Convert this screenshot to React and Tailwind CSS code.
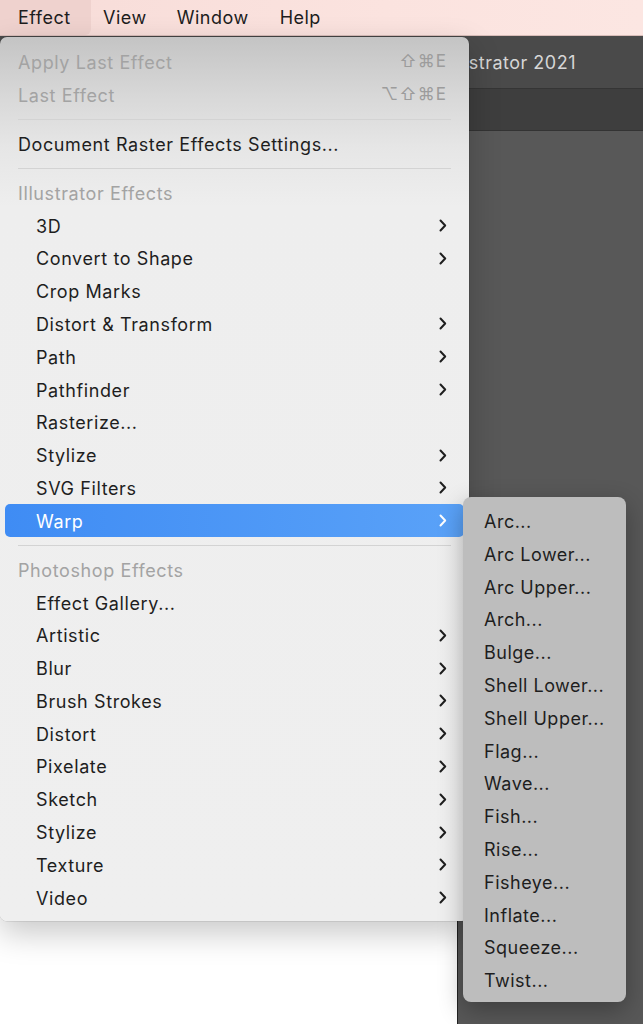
import React from "react";

const FONT = { fontFamily: "Inter, 'DejaVu Sans', sans-serif" };

function Chevron({ className = "" }) {
  return (
    <svg width="8" height="13" viewBox="0 0 8 13" className={className}>
      <path d="M1.5 1.5 L6.2 6.5 L1.5 11.5" fill="none" stroke="currentColor" strokeWidth="2" strokeLinecap="round" strokeLinejoin="round" />
    </svg>
  );
}

function Row({ label, shortcut, sub, disabled, header, indent = true, active }) {
  let pad;
  if (active) pad = "mx-[5px] pl-[31px] pr-[17px] rounded-[5px] bg-[linear-gradient(90deg,#3f8cf4,#5aa2f8)] text-white";
  else if (indent) pad = "pl-[36px] pr-[22px]";
  else pad = "pl-[18px] pr-[22px]";
  const color = active ? "" : disabled || header ? "text-[#a3a3a3]" : "text-[#1e1e1e]";
  return (
    <div className={`h-[32.8px] flex items-center ${pad} ${color}`}>
      <span className="flex-1 text-[18px] leading-none tracking-[0.6px] translate-y-[0.5px]">{label}</span>
      {shortcut && <span className="text-[17px] leading-none text-[#9c9c9c] tracking-[1px]">{shortcut}</span>}
      {sub && <Chevron className={active ? "text-white" : "text-[#1e1e1e]"} />}
    </div>
  );
}

function Sep() {
  return (
    <div className="h-[16.2px] flex items-center px-[18px]">
      <div className="h-px w-full bg-[#d3d3d3]" />
    </div>
  );
}

const illustrator = [
  ["3D", true],
  ["Convert to Shape", true],
  ["Crop Marks", false],
  ["Distort & Transform", true],
  ["Path", true],
  ["Pathfinder", true],
  ["Rasterize...", false],
  ["Stylize", true],
  ["SVG Filters", true],
];

const photoshop = [
  ["Effect Gallery...", false],
  ["Artistic", true],
  ["Blur", true],
  ["Brush Strokes", true],
  ["Distort", true],
  ["Pixelate", true],
  ["Sketch", true],
  ["Stylize", true],
  ["Texture", true],
  ["Video", true],
];

const warps = [
  "Arc...",
  "Arc Lower...",
  "Arc Upper...",
  "Arch...",
  "Bulge...",
  "Shell Lower...",
  "Shell Upper...",
  "Flag...",
  "Wave...",
  "Fish...",
  "Rise...",
  "Fisheye...",
  "Inflate...",
  "Squeeze...",
  "Twist...",
];

export default function App() {
  return (
    <div className="relative w-[643px] h-[1024px] overflow-hidden bg-white" style={FONT}>
      {/* Menubar */}
      <div className="h-[36px] flex items-stretch bg-[linear-gradient(90deg,#f7dcd8,#fbe3df_60%,#fce6e2)] border-b border-[#d9bdb9] text-[#1d1d1d] text-[18px] tracking-[0.5px]">
        <div className="w-[91px] pl-[18px] flex items-center bg-[#efd2ce] rounded-br-[6px]">Effect</div>
        <div className="pl-[12px] flex items-center">View</div>
        <div className="pl-[30px] flex items-center">Window</div>
        <div className="pl-[31px] flex items-center">Help</div>
      </div>
      {/* Title bar */}
      <div className="h-[52px] bg-[#4a4a4a] flex items-center justify-end pr-[67px] text-[18px] text-[#d6d6d6] tracking-[0.5px]">
        Adobe Illustrator 2021
      </div>
      <div className="h-[43px] bg-[#3e3e3e] border-t border-[#353535] border-b border-b-[#333]" />
      {/* Work area */}
      <div className="flex h-[893px]">
        <div className="w-[457px] bg-white" />
        <div className="w-px bg-[#222]" />
        <div className="flex-1 bg-[#585858]" />
      </div>

      {/* Main menu */}
      <div className="absolute left-0 top-[37px] w-[469px] h-[884px] rounded-[7px] pt-[8.6px] bg-[linear-gradient(180deg,#c4c4c4_0px,#d8d8d8_60px,#e6e6e6_110px,#eeeeee_170px,#efefef_100%)] shadow-[0_12px_32px_rgba(0,0,0,0.22),0_0_0_0.5px_rgba(0,0,0,0.15)]">
        <Row label="Apply Last Effect" shortcut="⇧⌘E" disabled indent={false} />
        <Row label="Last Effect" shortcut="⌥⇧⌘E" disabled indent={false} />
        <Sep />
        <Row label="Document Raster Effects Settings..." indent={false} />
        <Sep />
        <Row label="Illustrator Effects" header indent={false} />
        {illustrator.map(([l, s]) => (
          <Row key={l} label={l} sub={s} />
        ))}
        <Row label="Warp" sub active />
        <Sep />
        <Row label="Photoshop Effects" header indent={false} />
        {photoshop.map(([l, s]) => (
          <Row key={l} label={l} sub={s} />
        ))}
      </div>

      {/* Submenu */}
      <div className="absolute left-[463px] top-[497px] w-[163px] h-[505px] rounded-[8px] pt-[7.6px] bg-[#bdbdbd] shadow-[0_8px_24px_rgba(0,0,0,0.3)]">
        {warps.map((w) => (
          <div key={w} className="h-[32.8px] flex items-center pl-[21px] text-[18px] leading-none text-[#1e1e1e] tracking-[0.5px]">
            <span className="translate-y-[0.5px]">{w}</span>
          </div>
        ))}
      </div>
    </div>
  );
}
